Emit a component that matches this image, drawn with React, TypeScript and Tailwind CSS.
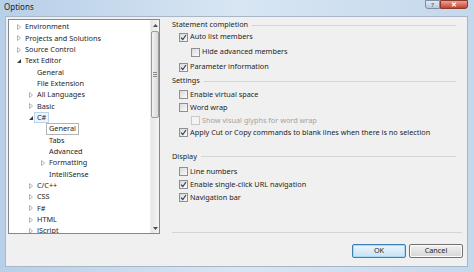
import React from 'react';

type Node = { label: string; level: number; arrow?: 'open' | 'closed'; selected?: boolean; focused?: boolean };

const tree: Node[] = [
  { label: 'Environment', level: 0, arrow: 'closed' },
  { label: 'Projects and Solutions', level: 0, arrow: 'closed' },
  { label: 'Source Control', level: 0, arrow: 'closed' },
  { label: 'Text Editor', level: 0, arrow: 'open' },
  { label: 'General', level: 1 },
  { label: 'File Extension', level: 1 },
  { label: 'All Languages', level: 1, arrow: 'closed' },
  { label: 'Basic', level: 1, arrow: 'closed' },
  { label: 'C#', level: 1, arrow: 'open', selected: true },
  { label: 'General', level: 2, focused: true },
  { label: 'Tabs', level: 2 },
  { label: 'Advanced', level: 2 },
  { label: 'Formatting', level: 2, arrow: 'closed' },
  { label: 'IntelliSense', level: 2 },
  { label: 'C/C++', level: 1, arrow: 'closed' },
  { label: 'CSS', level: 1, arrow: 'closed' },
  { label: 'F#', level: 1, arrow: 'closed' },
  { label: 'HTML', level: 1, arrow: 'closed' },
  { label: 'JScript', level: 1, arrow: 'closed' },
];

const indent = ['pl-[8px]', 'pl-[20px]', 'pl-[32px]'];

const Arrow = ({ kind }: { kind?: 'open' | 'closed' }) => (
  <span className="w-[5px] h-full flex items-center">
    {kind === 'closed' && (
      <svg width="4" height="6" viewBox="0 0 4 6" className="overflow-visible">
        <path d="M0.5 0.5 L3.5 3 L0.5 5.5 Z" fill="#fff" stroke="#b3b3b3" strokeWidth="1" />
      </svg>
    )}
    {kind === 'open' && (
      <svg width="4" height="4" viewBox="0 0 4 4" className="overflow-visible">
        <path d="M4 0 L4 4 L0 4 Z" fill="#3a3a3a" />
      </svg>
    )}
  </span>
);

const Check = ({ checked, disabled }: { checked?: boolean; disabled?: boolean }) => (
  <span
    className={`relative w-[9px] h-[9px] shrink-0 border ${
      disabled ? 'border-[#c9c9c9] bg-[#f4f4f4]' : 'border-[#8e8f8f] bg-gradient-to-br from-[#d9d9d9] to-[#fbfbfb]'
    }`}
  >
    {checked && (
      <svg width="7" height="7" viewBox="0 0 7 7" className="absolute left-0 top-0">
        <path d="M1 3.6 L2.8 5.5 L6 1" fill="none" stroke="#36425a" strokeWidth="1.2" />
      </svg>
    )}
  </span>
);

const Option = ({
  label,
  checked,
  disabled,
  nested,
  className,
}: {
  label: string;
  checked?: boolean;
  disabled?: boolean;
  nested?: boolean;
  className: string;
}) => (
  <div className={`flex items-center h-[12px] gap-[2px] ${nested ? 'pl-[19px]' : 'pl-[7px]'} ${className}`}>
    <Check checked={checked} disabled={disabled} />
    <span className={disabled ? 'text-[#a3a3a3]' : 'text-[#1e1e1e]'}>{label}</span>
  </div>
);

const GroupHeader = ({ label, className }: { label: string; className: string }) => (
  <div className={`flex items-center h-[12px] w-[284px] gap-[4px] ${className}`}>
    <span className="text-[#1e1e1e]">{label}</span>
    <span className="flex-1 h-px bg-[#d5d5d5]" />
  </div>
);

export default function App() {
  return (
    <div
      className="w-[474px] h-[272px] flex flex-col bg-gradient-to-r from-[#b7cfe8] via-[#d8e6f3] to-[#c4d8ec] overflow-hidden text-[7.3px] leading-none"
      style={{ fontFamily: '"Noto Sans", "Liberation Sans", sans-serif' }}
    >
      {/* title bar */}
      <div className="h-[16px] flex items-start justify-between pl-[4px] pr-[6px]">
        <span className="mt-[3px] text-[8px] text-[#222]">Options</span>
        <div className="flex">
          <span className="w-[15px] h-[9px] border border-[#7d8ea3] rounded-bl-[3px] bg-gradient-to-b from-[#e4ecf5] to-[#b9c9db] flex items-center justify-center text-[6px] text-[#333]">
            ?
          </span>
          <span className="w-[28px] h-[9px] border border-[#8c3a2c] rounded-br-[3px] bg-gradient-to-b from-[#e9a293] to-[#c2402b] flex items-center justify-center text-[7px] font-bold text-white">
            ✕
          </span>
        </div>
      </div>

      {/* client area */}
      <div className="flex-1 ml-[5px] mr-[6px] mb-[5px] bg-[#f0f0f0] border border-[#a8b7c8] flex flex-col">
        <div className="flex pt-[2px] pl-[2px]">
          {/* tree */}
          <div className="w-[152px] h-[215px] bg-white border border-[#828790] flex overflow-hidden">
            <div className="flex-1 pt-[1.3px] overflow-hidden">
              {tree.map((n, i) => (
                <div key={i} className={`h-[11.33px] flex items-stretch ${indent[n.level]}`}>
                  <Arrow kind={n.arrow} />
                  <span
                    className={`px-[2px] flex items-center border ${
                      n.selected
                        ? 'border-[#bcd2ea] bg-[#eef4fb]'
                        : n.focused
                        ? 'border-[#b4b4b4]'
                        : 'border-transparent'
                    } text-[#1e1e1e]`}
                  >
                    {n.label}
                  </span>
                </div>
              ))}
            </div>
            {/* scrollbar */}
            <div className="w-[9px] bg-gradient-to-r from-[#e6e6e6] to-[#f4f4f4] border-l border-[#ececec] flex flex-col items-center">
              <div className="h-[10px] flex items-center justify-center">
                <svg width="5" height="3" viewBox="0 0 5 3">
                  <path d="M0 3 L2.5 0 L5 3 Z" fill="#4d4d4d" />
                </svg>
              </div>
              <div className="mt-[1px] w-[8px] h-[87px] rounded-[2px] border border-[#9b9b9b] bg-gradient-to-r from-[#f3f3f3] to-[#d8d8d8] flex flex-col items-center justify-center gap-[1px]">
                <span className="w-[4px] h-px bg-[#8a8a8a]" />
                <span className="w-[4px] h-px bg-[#8a8a8a]" />
                <span className="w-[4px] h-px bg-[#8a8a8a]" />
              </div>
              <div className="mt-auto h-[10px] flex items-center justify-center">
                <svg width="5" height="3" viewBox="0 0 5 3">
                  <path d="M0 0 L2.5 3 L5 0 Z" fill="#4d4d4d" />
                </svg>
              </div>
            </div>
          </div>

          {/* options page */}
          <div className="ml-[12px] w-[290px] h-[215px] flex flex-col">
            <GroupHeader label="Statement completion" className="" />
            <Option label="Auto list members" checked className="" />
            <Option label="Hide advanced members" nested className="mt-[3px]" />
            <Option label="Parameter information" checked className="mt-[3px]" />
            <GroupHeader label="Settings" className="mt-[2px]" />
            <Option label="Enable virtual space" className="mt-[1.3px]" />
            <Option label="Word wrap" className="mt-[1.4px]" />
            <Option label="Show visual glyphs for word wrap" nested disabled className="mt-[1.3px]" />
            <Option label="Apply Cut or Copy commands to blank lines when there is no selection" checked className="mt-[-0.3px]" />
            <GroupHeader label="Display" className="mt-[12px]" />
            <Option label="Line numbers" className="mt-[2.6px]" />
            <Option label="Enable single-click URL navigation" checked className="mt-[1.2px]" />
            <Option label="Navigation bar" checked className="mt-[0.8px]" />
            <div className="mt-auto mb-[1px] h-px bg-[#d5d5d5]" />
          </div>
        </div>

        {/* buttons */}
        <div className="flex justify-end gap-[3px] pr-[4px] mt-[10px]">
          <button className="w-[54px] h-[14px] rounded-[2px] border border-[#3c7fb1] bg-gradient-to-b from-[#eaf6fd] to-[#c8e3f5] text-[7.3px] text-[#1e1e1e] shadow-[inset_0_0_0_1px_#a7d9f5]">
            OK
          </button>
          <button className="w-[54px] h-[14px] rounded-[2px] border border-[#707070] bg-gradient-to-b from-[#f2f2f2] to-[#d6d6d6] text-[7.3px] text-[#1e1e1e] shadow-[inset_0_0_0_1px_#fcfcfc]">
            Cancel
          </button>
        </div>
      </div>
    </div>
  );
}
